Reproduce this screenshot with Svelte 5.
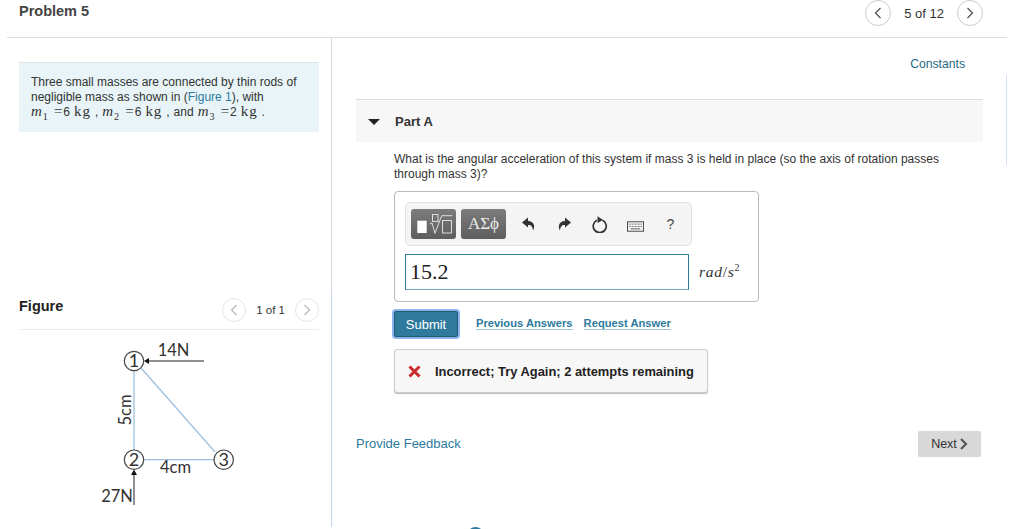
<script lang="ts">
	const toolIcons = ['undo', 'redo', 'reset', 'keyboard', 'help'];
</script>

<div class="page">
	<header class="top">
		<h1>Problem 5</h1>
		<div class="pager">
			<button class="round" aria-label="Previous">
				<svg width="10" height="12" viewBox="0 0 10 12"><path d="M7.500 1 2.500 6l5 5" /></svg>
			</button>
			<span>5 of 12</span>
			<button class="round" aria-label="Next">
				<svg width="10" height="12" viewBox="0 0 10 12"><path d="M2.500 1l5 5-5 5" /></svg>
			</button>
		</div>
	</header>

	<div class="columns">
		<aside class="left">
			<div class="intro">
				Three small masses are connected by thin rods of<br />
				negligible mass as shown in (<span class="link">Figure 1</span>), with<br />
				<span class="math-line"><span class="eq"><i>m</i><sub>1</sub> =</span>6 <span class="eq">kg</span> , <span class="eq"><i>m</i><sub>2</sub> =</span>6 <span class="eq">kg</span> , and <span class="eq"><i>m</i><sub>3</sub> =</span>2 <span class="eq">kg</span> .</span>
			</div>

			<div class="figure-head">
				<h2>Figure</h2>
				<div class="fig-pager">
					<button class="round faint" aria-label="Previous figure">
						<svg width="10" height="12" viewBox="0 0 10 12"><path d="M7.500 1 2.500 6l5 5" /></svg>
					</button>
					<span>1 of 1</span>
					<button class="round faint" aria-label="Next figure">
						<svg width="10" height="12" viewBox="0 0 10 12"><path d="M2.500 1l5 5-5 5" /></svg>
					</button>
				</div>
			</div>

			<svg class="diagram" width="130" height="170" viewBox="0 0 130 170">
				<g class="rods">
					<line x1="33" y1="29" x2="33" y2="108" />
					<line x1="40.500" y1="26.500" x2="114" y2="110" />
					<line x1="42" y1="117.700" x2="113" y2="117.700" />
				</g>
				<g class="arrows">
					<line x1="103" y1="19" x2="47" y2="19" />
					<path d="M43 19l5-3v6z" />
					<line x1="33" y1="163" x2="33" y2="131" />
					<path d="M33 127.500l-3 5.500h6z" />
				</g>
				<g class="nodes">
					<circle cx="33" cy="19" r="9.700" />
					<circle cx="33" cy="117.700" r="9.700" />
					<circle cx="122.700" cy="117.700" r="9.700" />
				</g>
				<g class="labels">
					<text x="33" y="24.500" class="num">1</text>
					<text x="33" y="123.500" class="num">2</text>
					<text x="122.700" y="123.500" class="num">3</text>
					<text x="72.500" y="14">14N</text>
					<text x="74.500" y="130.500">4cm</text>
					<text x="16" y="160">27N</text>
					<text transform="translate(29.700 68) rotate(-90)">5cm</text>
				</g>
			</svg>
		</aside>

		<main class="right">
			<div class="constants"><span>Constants</span></div>
			<div class="part-bar">
				<svg width="12" height="8" viewBox="0 0 12 8"><path d="M0 1h12L6 7z" /></svg>
				<strong>Part A</strong>
			</div>
			<div class="part-body">
				<p>What is the angular acceleration of this system if mass 3 is held in place (so the axis of rotation passes through mass 3)?</p>
				<div class="answer">
					<div class="toolbar">
						<button class="tpl" aria-label="Templates">
							<svg width="45" height="30" viewBox="0 0 45 30">
								<rect x="6.300" y="11.700" width="9.400" height="12.300" fill="#fff" />
								<rect x="21.500" y="5.500" width="5.500" height="7" fill="none" stroke="#ddd" />
								<path d="M19 15l2-1 3 10.300 6.700-17.600h10.600" fill="none" stroke="#ddd" />
								<rect x="31.500" y="11.500" width="9" height="12.500" fill="none" stroke="#ddd" />
							</svg>
						</button>
						<button class="tpl greek">ΑΣϕ</button>
						<div class="tools">
							{#each toolIcons as icon}
								<span class="tool">
									{#if icon === 'undo'}
										<svg width="15" height="14" viewBox="0 0 15 14"><path class="solid" d="M7 .5 1 5.500l6 5V8c2.500-.3 4.500 .7 5 5.500 2.500-4.500 1-9.300-5-9.600z" /></svg>
									{:else if icon === 'redo'}
										<svg width="15" height="14" viewBox="0 0 15 14"><path class="solid" d="M8 .5l6 5-6 5V8c-2.500-.3-4.500 .7-5 5.500-2.500-4.500-1-9.300 5-9.600z" /></svg>
									{:else if icon === 'reset'}
										<svg width="16" height="17" viewBox="0 0 16 17"><path class="ring" d="M10.500 4.200A6.500 6.500 0 1 1 5 4.200" /><path class="solid" d="M5.500 .3l5.500 3.800-5.500 3z" /></svg>
									{:else if icon === 'keyboard'}
										<svg class="keys" width="18" height="11" viewBox="0 0 18 11">
											<rect x=".5" y=".5" width="17" height="10" fill="#f4f4f4" stroke="#444" />
											<path d="M2 3h14M2 5.500h14" stroke="#666" stroke-dasharray="1 .6" />
											<path d="M4 8h10" stroke="#555" />
										</svg>
									{:else}
										<span class="q">?</span>
									{/if}
								</span>
							{/each}
						</div>
					</div>
					<div class="input-row">
						<div class="value">15.2</div>
						<span class="unit"><i>rad</i>/<i>s</i><sup>2</sup></span>
					</div>
				</div>
				<div class="actions">
					<button class="submit">Submit</button>
					<span class="act-link first">Previous Answers</span>
					<span class="act-link">Request Answer</span>
				</div>
				<div class="feedback">
					<svg width="13" height="13" viewBox="0 0 13 13"><path d="M1.500 1.500l10 10M11.500 1.500l-10 10" /></svg>
					<span>Incorrect; Try Again; 2 attempts remaining</span>
				</div>
			</div>
			<div class="foot">
				<span class="link">Provide Feedback</span>
				<button class="next">
					Next
					<svg width="9" height="12" viewBox="0 0 9 12"><path d="M2 1l5 5-5 5" /></svg>
				</button>
			</div>
		</main>
	</div>

	<!-- bits of the next frame and scrollbar showing at the screenshot edges -->
	<div class="edge-bar"></div>
	<div class="blip"></div>
</div>

<style>
	:global(body) {
		margin: 0;
		background: #fff;
	}

	.page {
		position: relative;
		width: 1024px;
		height: 529px;
		overflow: hidden;
		font-family: "Liberation Sans", Arial, sans-serif;
		font-size: 13px;
		color: #333;
	}

	button {
		font-family: inherit;
		padding: 0;
	}

	.top {
		display: flex;
		align-items: flex-start;
		justify-content: space-between;
		box-sizing: border-box;
		width: 1000px;
		height: 38px;
		margin-left: 7px;
		padding: 0 24px 0 12px;
		border-bottom: 1px solid #ddd;
	}

	h1 {
		margin: 3px 0 0;
		font-size: 14.500px;
		font-weight: 700;
		color: #444;
	}

	.pager {
		display: flex;
		align-items: center;
		gap: 13px;
	}

	.pager span {
		padding-top: 1px;
	}

	.round {
		display: flex;
		align-items: center;
		justify-content: center;
		width: 26px;
		height: 26px;
		background: #fff;
		border: 1px solid #ccc;
		border-radius: 50%;
	}

	.round svg path {
		fill: none;
		stroke: #555;
		stroke-width: 1.300;
	}

	.round.faint {
		width: 24px;
		height: 24px;
		border-color: #e4e4e4;
	}

	.round.faint svg path {
		stroke: #bbb;
	}

	.columns {
		display: grid;
		grid-template-columns: 325px 1fr;
		margin-left: 7px;
	}

	.left {
		height: 489px;
		box-sizing: border-box;
		padding: 24px 12px 0;
		border-right: 1px solid #d4d8dc;
		border-image: linear-gradient(#d4d8dc 0 254px, #c6d4ea 254px) 1;
	}

	.intro {
		box-sizing: border-box;
		width: 300px;
		height: 70px;
		padding: 12px 12px 0;
		background: #e8f4f7;
		border-top: 1px solid #dde3e6;
		font-size: 12px;
		line-height: 15px;
		white-space: nowrap;
		color: #333;
	}

	.math-line {
		word-spacing: .7px;
	}

	.eq {
		font-family: "Liberation Serif", serif;
		font-size: 15px;
		letter-spacing: .9px;
		line-height: 0;
	}

	.eq sub {
		font-size: 10px;
		line-height: 0;
	}

	.link {
		color: #2d7a9c;
	}

	.figure-head {
		display: flex;
		align-items: center;
		justify-content: space-between;
		height: 36px;
		margin-top: 161px;
		border-bottom: 1px solid #eee;
	}

	h2 {
		margin: 0 0 10px;
		font-size: 14.500px;
		font-weight: 700;
		color: #222;
	}

	.fig-pager {
		display: flex;
		align-items: center;
		gap: 10px;
		margin-bottom: 2px;
		font-size: 11.500px;
	}

	.diagram {
		display: block;
		margin: 12px 0 0 82px;
		overflow: visible;
	}

	.rods line {
		stroke: #9dc0e0;
		stroke-width: 1.300;
	}

	.arrows line {
		stroke: #222;
		stroke-width: 1;
	}

	.arrows path {
		fill: #111;
	}

	.nodes circle {
		fill: #fff;
		stroke: #444;
		stroke-width: 1.200;
	}

	.labels text {
		font-family: Lato, "Open Sans", sans-serif;
		font-size: 16.500px;
		fill: #333;
		text-anchor: middle;
	}

	.labels text.num {
		font-size: 18px;
	}

	.right {
		padding: 0 41px 0 24px;
	}

	.constants {
		display: flex;
		justify-content: flex-end;
		box-sizing: border-box;
		height: 61px;
		padding: 19px 18px 0 0;
		font-size: 12.200px;
		color: #276a83;
	}

	.part-bar {
		display: flex;
		align-items: center;
		gap: 15px;
		box-sizing: border-box;
		height: 43px;
		padding: 1px 0 0 12px;
		background: #f7f7f7;
		border-top: 1px solid #ddd;
		font-size: 13px;
		color: #333;
	}

	.part-bar path {
		fill: #222;
	}

	.part-body {
		padding-left: 38px;
	}

	.part-body p {
		width: 560px;
		margin: 10px 0 9px;
		font-size: 12px;
		line-height: 15px;
	}

	.answer {
		box-sizing: border-box;
		width: 365px;
		height: 111px;
		padding: 10px;
		border: 1px solid #bbb;
		border-radius: 4px;
	}

	.toolbar {
		display: flex;
		align-items: center;
		gap: 5px;
		box-sizing: border-box;
		width: 287px;
		height: 44px;
		padding-left: 5px;
		background: #f4f4f4;
		border: 1px solid #e2e2e2;
		border-radius: 5px;
	}

	.tpl {
		display: flex;
		align-items: center;
		justify-content: center;
		width: 45px;
		height: 30px;
		border: none;
		border-radius: 3px;
		background: linear-gradient(#7c7c7c, #5e5e5e);
		color: #eee;
	}

	.greek {
		font-family: "Liberation Serif", serif;
		font-size: 17px;
	}

	.tools {
		display: flex;
		align-items: center;
		gap: 18.500px;
		margin-left: 9px;
	}

	.tool {
		display: flex;
		align-items: center;
		justify-content: center;
		width: 17px;
	}

	.keys {
		margin-top: 5px;
	}

	.solid {
		fill: #333;
	}

	.ring {
		fill: none;
		stroke: #333;
		stroke-width: 1.700;
	}

	.q {
		font-size: 14px;
		color: #444;
	}

	.input-row {
		display: flex;
		align-items: center;
		gap: 10px;
		margin-top: 8px;
	}

	.value {
		box-sizing: border-box;
		width: 284px;
		height: 36px;
		padding-left: 4px;
		border: 1px solid #2e7d99;
		border-bottom-color: #6ea9c0;
		font-family: "Liberation Serif", serif;
		font-size: 22px;
		line-height: 34px;
		color: #222;
	}

	.unit {
		font-family: "Liberation Serif", serif;
		font-size: 15.500px;
		letter-spacing: .7px;
		color: #333;
	}

	.unit sup {
		font-size: 10px;
		line-height: 0;
	}

	.actions {
		display: flex;
		align-items: center;
		margin-top: 9px;
		font-size: 11.200px;
	}

	.submit {
		box-sizing: border-box;
		width: 64px;
		height: 26px;
		background: #2f7a9c;
		border: 1px solid #1e5a75;
		border-radius: 2px;
		box-shadow: 0 0 0 2px #8eb4f0;
		color: #fff;
		font-size: 13px;
	}

	.act-link {
		margin: 0 0 2px 11px;
		font-weight: 700;
		color: #2d7a9c;
		border-bottom: 1px solid #9cc3d3;
	}

	.act-link.first {
		margin-left: 18px;
	}

	.feedback {
		display: flex;
		align-items: center;
		gap: 14px;
		box-sizing: border-box;
		width: 314px;
		height: 44px;
		margin-top: 12px;
		padding-left: 13px;
		background: #f7f7f7;
		border: 1px solid #ccc;
		border-radius: 3px;
		box-shadow: 0 1px 1px #bbb;
		font-size: 12.900px;
		font-weight: 700;
		color: #222;
	}

	.feedback path {
		fill: none;
		stroke: #cc2b2b;
		stroke-width: 3;
	}

	.foot {
		display: flex;
		align-items: flex-start;
		justify-content: space-between;
		width: 625px;
		margin-top: 38px;
	}

	.foot .link {
		margin-top: 5px;
		font-size: 13px;
	}

	.next {
		display: flex;
		align-items: center;
		justify-content: center;
		gap: 2px;
		width: 63px;
		height: 26px;
		background: #d8d8d8;
		border: none;
		border-radius: 2px;
		font-size: 12.500px;
		color: #333;
	}

	.next path {
		fill: none;
		stroke: #555;
		stroke-width: 2.200;
	}

	.edge-bar {
		position: absolute;
		left: 1006px;
		top: 75px;
		width: 1px;
		height: 90px;
		background: #d4e2f5;
	}

	.blip {
		position: absolute;
		left: 467px;
		top: 527px;
		width: 17px;
		height: 17px;
		border-radius: 50%;
		background: #2d7a9c;
	}
</style>
